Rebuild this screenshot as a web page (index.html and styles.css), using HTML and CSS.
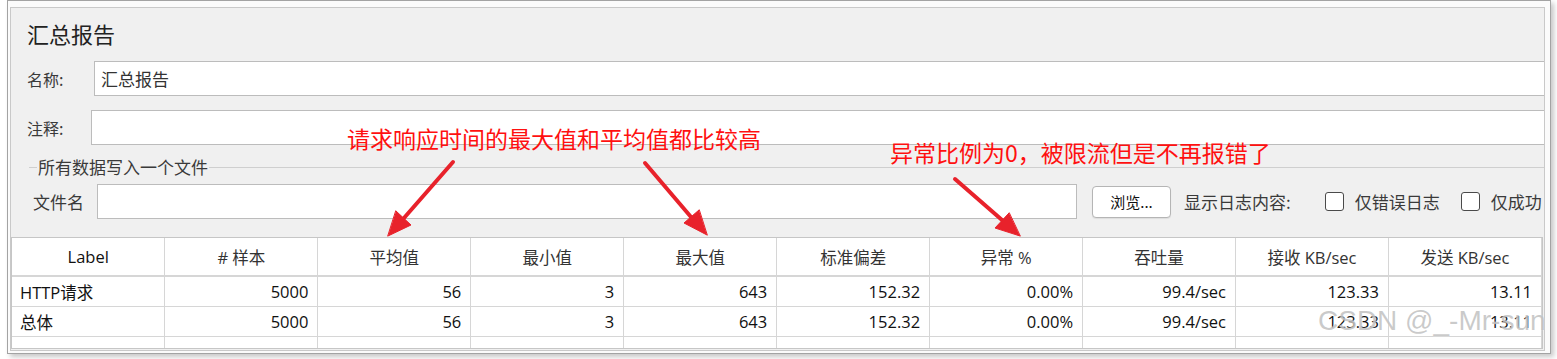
FILE: index.html
```html
<!DOCTYPE html>
<html lang="zh-CN">
<head>
  <meta charset="UTF-8">
  <title>汇总报告</title>
  <link rel="stylesheet" href="styles.css">
</head>
<body>
  <div class="screen">
    <div class="window">
      <div class="panel">
        <div class="title">汇总报告</div>

        <!-- Name / comment -->
        <div class="field-row name-row">
          <span class="field-label">名称:</span>
          <div class="text-field">汇总报告</div>
        </div>
        <div class="field-row comment-row">
          <span class="field-label">注释:</span>
          <div class="text-field"></div>
        </div>

        <!-- Write to file group -->
        <div class="group-title">
          <span class="group-line short"></span>
          <span class="group-text">所有数据写入一个文件</span>
          <span class="group-line"></span>
        </div>
        <div class="file-row">
          <span class="file-label">文件名</span>
          <div class="text-field file-field"></div>
          <button class="browse-btn">浏览...</button>
          <span class="log-label">显示日志内容:</span>
          <span class="checkbox first"></span>
          <span class="check-label">仅错误日志</span>
          <span class="checkbox"></span>
          <span class="check-label">仅成功日志</span>
        </div>

        <!-- Results table -->
        <div class="table-wrap">
          <table class="results">
            <thead>
              <tr>
                <th class="latin">Label</th>
                <th># 样本</th>
                <th>平均值</th>
                <th>最小值</th>
                <th>最大值</th>
                <th>标准偏差</th>
                <th>异常 %</th>
                <th>吞吐量</th>
                <th>接收 KB/sec</th>
                <th>发送 KB/sec</th>
              </tr>
            </thead>
            <tbody>
              <tr>
                <td class="label-cell">HTTP请求</td>
                <td>5000</td><td>56</td><td>3</td><td>643</td><td>152.32</td>
                <td>0.00%</td><td>99.4/sec</td><td>123.33</td><td>13.11</td>
              </tr>
              <tr>
                <td class="label-cell">总体</td>
                <td>5000</td><td>56</td><td>3</td><td>643</td><td>152.32</td>
                <td>0.00%</td><td>99.4/sec</td><td>123.33</td><td>13.11</td>
              </tr>
              <tr class="empty-row">
                <td></td><td></td><td></td><td></td><td></td>
                <td></td><td></td><td></td><td></td><td></td>
              </tr>
            </tbody>
          </table>
        </div>
      </div>
    </div>

    <!-- Annotations drawn over the screenshot -->
    <div class="note note-avg">请求响应时间的最大值和平均值都比较高</div>
    <div class="note note-err">异常比例为0，被限流但是不再报错了</div>
    <svg class="arrows" width="1557" height="359" viewBox="0 0 1557 359">
      <g fill="#e8222b" stroke="#e8222b" stroke-linecap="round">
        <line x1="453" y1="162" x2="404" y2="218" stroke-width="4"/>
        <polygon points="388,236 411,225 396,211" stroke-width="1"/>
        <line x1="645" y1="163" x2="691" y2="217" stroke-width="4"/>
        <polygon points="707,235 684,223 699,210" stroke-width="1"/>
        <line x1="955" y1="179" x2="1002" y2="220" stroke-width="4"/>
        <polygon points="1020,236 995,228 1009,213" stroke-width="1"/>
      </g>
    </svg>
    <div class="watermark">CSDN @_-Mr-sun</div>
  </div>
</body>
</html>
```

FILE: styles.css
```css
/* General */
body {
  margin: 0;
  background-color: #fff;
  font-family: "Noto Sans CJK SC", sans-serif;
  color: #333;
}

.screen {
  position: relative;
  width: 1557px;
  height: 359px;
  padding-left: 7px;
  box-sizing: border-box;
  overflow: hidden;
}

/* Window frame */
.window {
  width: 1544px;
  box-sizing: border-box;
  border: 1px solid #a3a3a3;
  background-color: #fbfbfb;
  padding: 6px 5px 2px 2px;
  box-shadow: 3px 3px 5px rgba(0, 0, 0, 0.22);
}

.panel {
  border: 1px solid #c9c9c9;
  background-color: #f0f0f0;
  padding: 11px 0 1px 0;
  overflow: hidden;
}

.title {
  height: 28px;
  line-height: 28px;
  padding-left: 16px;
  font-size: 22px;
  color: #222;
}

/* Name / comment rows */
.field-row {
  display: flex;
  align-items: center;
  height: 35px;
  margin-top: 14px;
  padding-left: 16px;
}
.field-label {
  flex-shrink: 0;
  font-size: 16px;
  color: #3a3a3a;
}
.name-row .field-label {
  width: 67px;
}
.comment-row .field-label {
  width: 64px;
}
.text-field {
  flex: 1;
  height: 35px;
  box-sizing: border-box;
  margin-right: -6px;
  border: 1px solid #bcbcbc;
  background-color: #fff;
  padding-left: 6px;
  line-height: 33px;
  font-size: 17px;
  color: #333;
}

/* Group title */
.group-title {
  display: flex;
  align-items: center;
  height: 22px;
  margin-top: 11px;
  padding-left: 18px;
}
.group-line {
  flex: 1;
  height: 1px;
  background-color: #cfcfcf;
}
.group-line.short {
  flex: none;
  width: 8px;
}
.group-text {
  padding: 0 1px;
  font-size: 17px;
  line-height: 22px;
  color: #3a3a3a;
}

/* File row */
.file-row {
  display: flex;
  align-items: center;
  height: 35px;
  margin-top: 6px;
  padding-left: 22px;
  white-space: nowrap;
}
.file-row > * {
  flex-shrink: 0;
}
.file-label {
  width: 64px;
  font-size: 17px;
  color: #3a3a3a;
}
.file-field {
  flex: none;
  width: 980px;
  margin-right: 0;
}
.browse-btn {
  width: 79px;
  height: 32px;
  margin-left: 15px;
  border: 1px solid #b5b5b5;
  border-radius: 4px;
  background-color: #fff;
  box-shadow: 0 1px 1px rgba(0, 0, 0, 0.08);
  font-family: "Noto Sans CJK SC", sans-serif;
  font-size: 15px;
  color: #111;
  padding: 0;
}
.log-label {
  margin-left: 13px;
  font-size: 17px;
  color: #3a3a3a;
}
.checkbox {
  width: 19px;
  height: 19px;
  box-sizing: border-box;
  margin-left: 21px;
  border: 1.5px solid #4a4a4a;
  border-radius: 3px;
  background-color: #fff;
}
.checkbox.first {
  margin-left: 34px;
}
.check-label {
  margin-left: 11px;
  font-size: 17px;
  color: #3a3a3a;
}

/* Results table */
.table-wrap {
  height: 112px;
  margin-top: 18px;
  margin-right: 1px;
  box-sizing: border-box;
  border: 1px solid #c6c6c6;
  background-color: #fff;
  overflow: hidden;
}
.results {
  width: 1530px;
  table-layout: fixed;
  border-collapse: collapse;
  font-family: "Open Sans", "Noto Sans CJK SC", sans-serif;
  font-size: 16.5px;
}
.results th {
  height: 37px;
  padding: 0;
  border-right: 1px solid #d6d6d6;
  border-bottom: 2px solid #d6d6d6;
  font-weight: normal;
  text-align: center;
  color: #333;
}
.results th.latin {
  color: #111;
}
.results td {
  height: 29px;
  padding: 0 9px;
  border-right: 1px solid #d6d6d6;
  border-bottom: 1px solid #d6d6d6;
  text-align: right;
  color: #111;
  white-space: nowrap;
}
.results td.label-cell {
  text-align: left;
  padding-left: 8px;
}
.results .empty-row td {
  height: 12px;
}

/* Annotations over the screenshot */
.note {
  position: absolute;
  font-family: "Noto Sans CJK SC", serif;
  font-size: 23px;
  line-height: 26px;
  color: #ff1010;
  white-space: nowrap;
}
.note-avg {
  left: 347px;
  top: 125px;
}
.note-err {
  left: 890px;
  top: 139px;
}
.arrows {
  position: absolute;
  left: 0;
  top: 0;
  pointer-events: none;
}
.watermark {
  position: absolute;
  left: 1318px;
  top: 305px;
  font-family: "Liberation Sans", sans-serif;
  font-size: 28px;
  color: rgba(150, 150, 150, 0.5);
  text-shadow: 0 0 1px rgba(255, 255, 255, 0.8);
  white-space: nowrap;
}
```
